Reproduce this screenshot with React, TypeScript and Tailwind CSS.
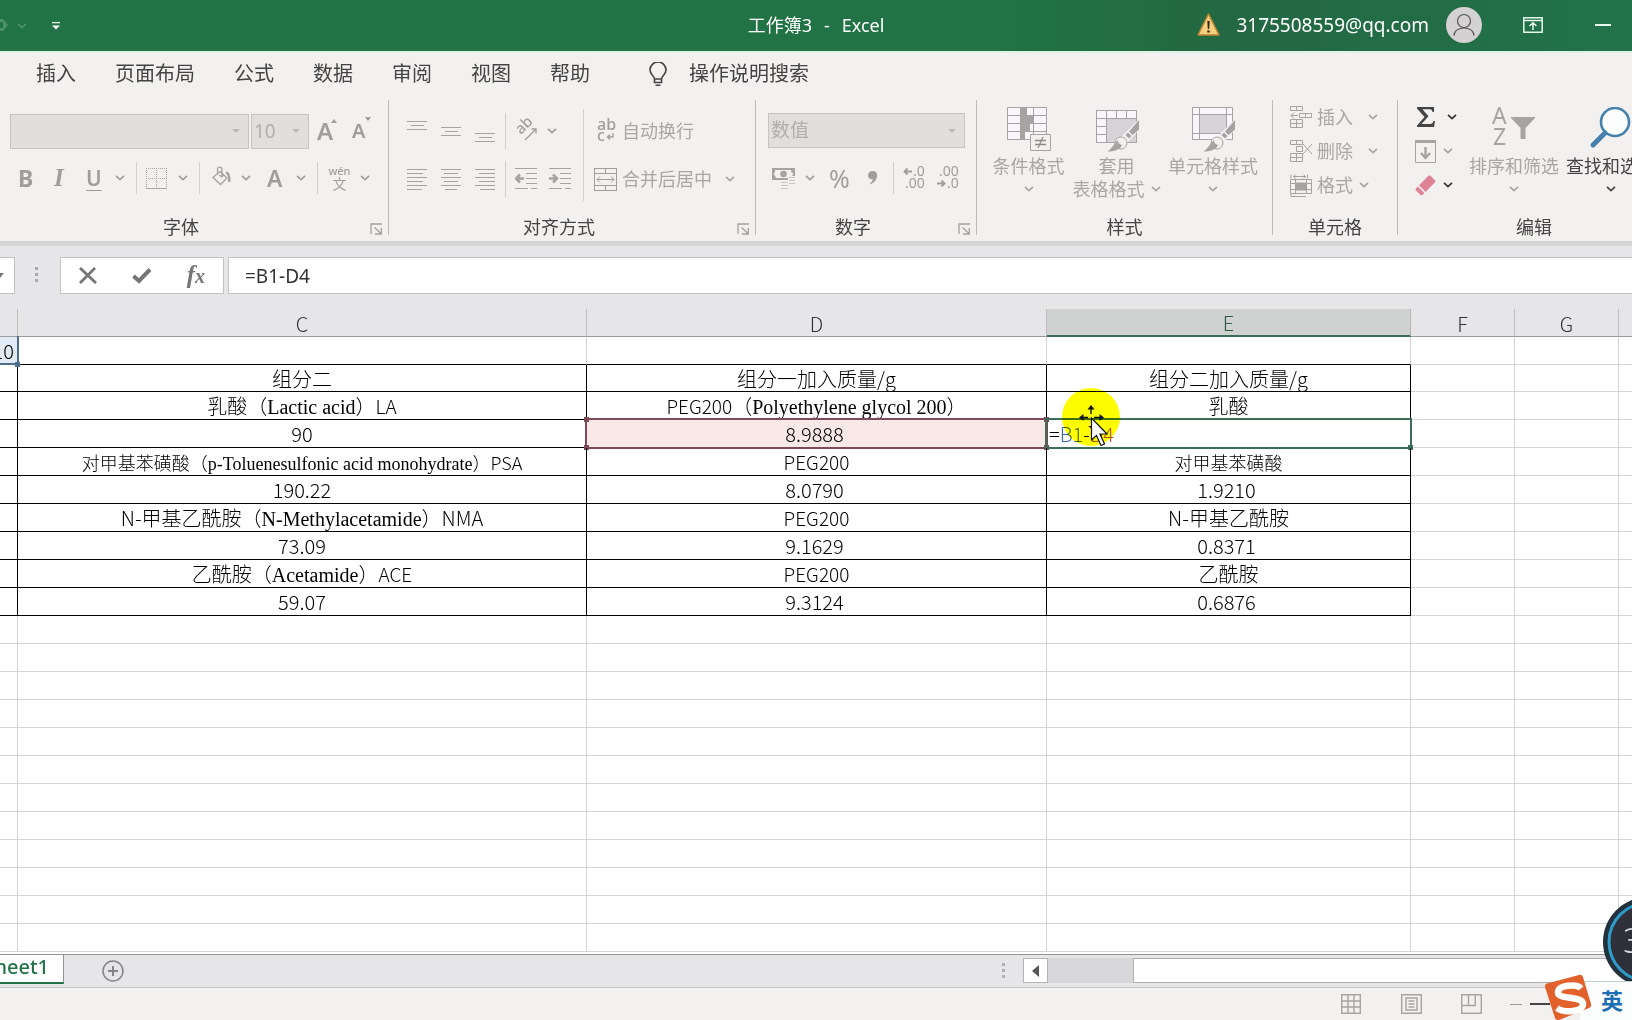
import type { ReactNode } from 'react';
import clsx from 'clsx';

const UI_FONT = "font-['Noto_Sans','Noto_Sans_CJK_SC',sans-serif]";
const CELL_FONT = "font-['Noto_Sans_CJK_SC',sans-serif]";

function Chevron({ className }: { className?: string }) {
  return (
    <svg width="10" height="6" viewBox="0 0 10 6" fill="none" stroke="currentColor" strokeWidth="1.7" className={clsx('shrink-0', className)}>
      <path d="M1 .8 5 4.6 9 .8" />
    </svg>
  );
}

function Caret() {
  return (
    <svg width="8" height="4" viewBox="0 0 8 4" className="mr-2 shrink-0 text-[#bbb9b8]">
      <path d="M0 0h8L4 4z" fill="currentColor" />
    </svg>
  );
}

function Tool({ label, className, children }: { label: string; className?: string; children: ReactNode }) {
  return (
    <button type="button" aria-label={label} className={clsx('flex shrink-0 items-center', className)}>
      {children}
    </button>
  );
}

function Divider({ className }: { className?: string }) {
  return <div className={clsx('w-px shrink-0 bg-[#d2d0cf]', className)} />;
}

function Combo({ label, value, className }: { label: string; value: string; className?: string }) {
  return (
    <div className={clsx('flex h-[35px] items-center border border-[#c6c4c3] bg-[#e1dfde]', className)}>
      <select aria-label={label} defaultValue={value} className="h-full min-w-0 flex-1 appearance-none pl-0.5 text-[19px] text-[#b1afae] outline-none">
        <option>{value}</option>
      </select>
      <Caret />
    </div>
  );
}

function Launcher({ label }: { label: string }) {
  return (
    <button type="button" aria-label={label} className="mr-[5px]">
      <svg width="13" height="12" viewBox="0 0 13 12" fill="none" stroke="#a3a1a0" strokeWidth="1.3">
        <path d="M1 11V1h11M4.500 4.500 11 10.500M11.300 5v6H5" />
      </svg>
    </button>
  );
}

function Group({ title, launcher, className, children }: { title: string; launcher?: boolean; className?: string; children: ReactNode }) {
  return (
    <section className={clsx('flex h-[135px] shrink-0 flex-col border-r border-[#bdbbba]', className)}>
      <div className="h-[115px]">{children}</div>
      <div className="flex h-5 items-end">
        <h2 className={clsx('flex-1 text-center text-[18px] leading-4 text-[#444]', launcher && 'pr-2')}>{title}</h2>
        {launcher && <Launcher label={`${title}设置`} />}
      </div>
    </section>
  );
}

/* Stacked strokes used for the alignment buttons: y, x1, x2 */
function Lines({ rows }: { rows: number[][] }) {
  return (
    <svg width="21" height="22" viewBox="0 0 21 22" stroke="#a6a4a3" shapeRendering="crispEdges">
      {rows.map(([y, x1, x2]) => (
        <path key={y} d={`M${x1} ${y + 0.5}H${x2}`} />
      ))}
    </svg>
  );
}

function Indent({ flip }: { flip?: boolean }) {
  return (
    <svg width="22" height="22" viewBox="0 0 22 22" fill="none" stroke="#a6a4a3">
      <path d="M0 .5h22M11 5.500h11M11 10.500h11M11 15.500h11M0 20.500h13M16 20.500h6" shapeRendering="crispEdges" />
      <path d={flip ? 'M0 10.500h8M4 6.500l4 4-4 4' : 'M9 10.500H1M5 6.500l-4 4 4 4'} strokeWidth="2.600" />
    </svg>
  );
}

function FontGroup() {
  return (
    <Group title="字体" launcher className="w-[389px]">
      <div className="flex items-center pt-[13px] pl-[10px]">
        <Combo label="字体" value="" className="w-[239px]" />
        <Combo label="字号" value="10" className="ml-0.5 w-[58px]" />
        <Tool label="增大字号" className="ml-2 w-7 items-start">
          <span className="text-[24px] leading-8 font-semibold text-[#a09e9d]">A</span>
          <svg width="6" height="4" viewBox="0 0 6 4" className="mt-1 -ml-0.5"><path d="M3 0l3 4H0z" fill="#a09e9d" /></svg>
        </Tool>
        <Tool label="减小字号" className="ml-[7px] w-7 items-start">
          <span className="text-[20px] leading-9 font-semibold text-[#a09e9d]">A</span>
          <svg width="6" height="4" viewBox="0 0 6 4" className="mt-1"><path d="M0 0h6L3 4z" fill="#a09e9d" /></svg>
        </Tool>
      </div>
      <div className="mt-[11px] flex h-9 items-center pl-[18px] text-[#a09e9d]">
        <Tool label="加粗" className="w-9 text-[23px] leading-8 font-bold">B</Tool>
        <Tool label="倾斜" className="w-8 font-['Liberation_Serif',serif] text-[25px] leading-8 font-bold italic">I</Tool>
        <Tool label="下划线" className="w-[29px] text-[21px] leading-8 font-semibold underline decoration-1 underline-offset-4">U</Tool>
        <Chevron />
        <Divider className="ml-[11px] h-8" />
        <Tool label="边框" className="ml-[9px]">
          <svg width="21" height="21" viewBox="0 0 21 21" fill="none" stroke="#a6a4a3" shapeRendering="crispEdges">
            <path d="M.5 0v20M20.500 0v20M0 .5h21M10.500 0v20M0 10.500h21" strokeDasharray="1 1" />
            <path d="M0 20.500h21" />
          </svg>
        </Tool>
        <Chevron className="ml-[11px]" />
        <Divider className="ml-[11px] h-8" />
        <Tool label="填充颜色" className="ml-[12px] pb-1">
          <svg width="19" height="20" viewBox="0 0 19 20" fill="none" stroke="#a6a4a3" strokeWidth="1.3">
            <path d="M8 5.500 15 12l-6.500 6.500L1 11.500z" />
            <path d="M5.500 8V3.200q0-2 2.200-2t2.200 2V11M7 9l2.900 2L12 8.500" />
            <path d="M14 6.500c3 .5 3.500 4 3.200 9.500" strokeWidth="2.400" />
          </svg>
        </Tool>
        <Chevron className="ml-[10px]" />
        <Tool label="字体颜色" className="ml-4 text-[23px] leading-8 font-semibold">A</Tool>
        <Chevron className="ml-[14px]" />
        <Divider className="ml-[11px] h-8" />
        <Tool label="拼音指南" className="ml-[10px] w-[22px] flex-col">
          <span className="text-[11px] leading-[10px] font-medium">wén</span>
          <span className="text-[14px] leading-[15px]">文</span>
        </Tool>
        <Chevron className="ml-[10px]" />
      </div>
    </Group>
  );
}

function AlignGroup() {
  return (
    <Group title="对齐方式" launcher className="w-[367px]">
      <div className="flex h-full">
        <div className="pl-[18px]">
          <div className="mt-[13px] flex h-9 items-center gap-[13px]">
            <Tool label="顶端对齐"><Lines rows={[[1, 0, 20], [5, 4, 17], [9, 0, 20]]} /></Tool>
            <Tool label="垂直居中"><Lines rows={[[7, 0, 20], [11, 4, 17], [15, 0, 20]]} /></Tool>
            <Tool label="底端对齐"><Lines rows={[[13, 0, 20], [17, 4, 17], [21, 0, 20]]} /></Tool>
            <Divider className="-ml-1 h-9" />
            <Tool label="方向" className="-ml-[3px]">
              <svg width="22" height="22" viewBox="0 0 22 22" fill="none" stroke="#a09e9d" strokeWidth="1.4" className="overflow-visible">
                <text transform="translate(5 15) rotate(-45)" fontSize="15" fontWeight="500" fill="#a09e9d" stroke="none">ab</text>
                <path d="M9 20 20 9M15.500 9H20v4.500" />
              </svg>
            </Tool>
            <Chevron className="-ml-1 text-[#a09e9d]" />
          </div>
          <div className="mt-3 flex h-9 items-center gap-[13px]">
            <Tool label="左对齐"><Lines rows={[[1, 0, 20], [5, 0, 16], [9, 0, 20], [13, 0, 16], [17, 0, 20], [21, 0, 15]]} /></Tool>
            <Tool label="居中"><Lines rows={[[1, 0, 20], [5, 3, 17], [9, 0, 20], [13, 3, 17], [17, 0, 20], [21, 4, 16]]} /></Tool>
            <Tool label="右对齐"><Lines rows={[[1, 0, 20], [5, 4, 20], [9, 0, 20], [13, 4, 20], [17, 0, 20], [21, 5, 20]]} /></Tool>
            <Divider className="-ml-1 h-9" />
            <Tool label="减少缩进量" className="-ml-1"><Indent /></Tool>
            <Tool label="增加缩进量" className="-ml-px"><Indent flip /></Tool>
          </div>
        </div>
        <Divider className="mt-[9px] ml-3 h-[92px]" />
        <div className="pl-[10px] text-[18px] text-[#a9a7a6]">
          <button type="button" className="mt-[13px] flex h-9 items-center gap-[5px] whitespace-nowrap">
            <svg width="23" height="24" viewBox="0 0 23 24" fill="none" stroke="#a09e9d" strokeWidth="1.3" className="overflow-visible">
              <text x="3" y="11" fontSize="16" fontWeight="500" fill="#a09e9d" stroke="none">ab</text>
              <text x="3" y="22" fontSize="16" fontWeight="500" fill="#a09e9d" stroke="none">c</text>
              <path d="M19 14v4h-5.500M16 15.500 13.500 18l2.500 2.500" />
            </svg>
            自动换行
          </button>
          <button type="button" className="mt-3 flex h-9 items-center gap-[5px] whitespace-nowrap">
            <svg width="23" height="23" viewBox="0 0 23 23" fill="none" stroke="#a09e9d">
              <path d="M.5.5h22v22H.5zM.5 5.500h22M.5 17.500h22M11.500 1v4M11.500 18v4" shapeRendering="crispEdges" />
              <path d="M3 11.500h17M6 8.500l-3 3 3 3M17 8.500l3 3-3 3" />
            </svg>
            合并后居中
            <Chevron className="ml-2" />
          </button>
        </div>
      </div>
    </Group>
  );
}

function NumberGroup() {
  return (
    <Group title="数字" launcher className="w-[221px]">
      <div className="pt-[13px] pl-3">
        <Combo label="数字格式" value="数值" className="w-[197px]" />
      </div>
      <div className="mt-3 flex h-9 items-center pl-4 text-[#a09e9d]">
        <Tool label="会计数字格式">
          <svg width="24" height="23" viewBox="0 0 24 23">
            <path d="M0 1h23v12H0zM3 3v2a2 2 0 0 1-1 1v2q1 0 2 3h15q0-2 2-3V6q-2 0-2-3z" fill="#a6a4a3" fillRule="evenodd" />
            <circle cx="11.500" cy="7" r="3.300" fill="#a6a4a3" />
            <path d="M16 9h8v9h-8zM8 14h9v8H8z" fill="#f3f1f0" />
            <path d="M17 10.500h6M17 13.500h6M17 16.500h6M9 15.500h7M9 18.500h7M9 21.500h7" stroke="#c9c7c6" />
          </svg>
        </Tool>
        <Chevron className="ml-[9px]" />
        <Tool label="百分比样式" className="ml-[14px] text-[25px] leading-8">%</Tool>
        <Tool label="千位分隔样式" className="ml-[18px]">
          <svg width="10" height="14" viewBox="0 0 10 14"><path d="M4.500 0C8 0 9.500 2.200 9 5.500 8.500 9.500 5.500 12.500 1 13.500c2.500-2 3.600-3.500 3.800-5.200C2 8.600 0 7 0 4.500 0 2 2 0 4.500 0" fill="#a09e9d" /></svg>
        </Tool>
        <Divider className="ml-[15px] h-8" />
        <Tool label="增加小数位数" className="ml-[9px]">
          <svg width="24" height="24" viewBox="0 0 24 24" fill="#a09e9d" fontSize="14" className="overflow-visible">
            <text x="10" y="10">.0</text><text x="2" y="22">.00</text>
            <path d="M9 5.500H1.500M4.500 2.500l-3 3 3 3" fill="none" stroke="#a09e9d" strokeWidth="1.800" />
          </svg>
        </Tool>
        <Tool label="减少小数位数" className="ml-[10px]">
          <svg width="24" height="24" viewBox="0 0 24 24" fill="#a09e9d" fontSize="14" className="overflow-visible">
            <text x="2" y="10">.00</text><text x="10" y="22">.0</text>
            <path d="M0 17.500h7.500M4.500 14.500l3 3-3 3" fill="none" stroke="#a09e9d" strokeWidth="1.800" />
          </svg>
        </Tool>
      </div>
    </Group>
  );
}

function Brush() {
  return (
    <>
      <path d="M45 12v11L32 37l-8-4z" fill="#f3f1f0" stroke="none" />
      <path d="M45 13v9.500L38.500 28 35 24.500zM34 25.500l3.500 3.500-2.500 2.500-3.500-3.500z" fill="#a6a4a3" stroke="none" />
      <circle cx="27" cy="36" r="6" fill="#f3f1f0" />
      <path d="M13 44.500c4-1.500 6-6.500 11-11.500 0 3 1 4 4 5-1.500 4.500-8 7-15 6.500" fill="#a6a4a3" stroke="none" />
    </>
  );
}

function BigButton({ icon, lines, dark, className }: { icon: ReactNode; lines: string[]; dark?: boolean; className?: string }) {
  return (
    <button type="button" className={clsx('flex shrink-0 flex-col items-center pt-[7px] text-[18px] whitespace-nowrap', dark ? 'text-[#444]' : 'text-[#a9a7a6]', className)}>
      <svg width="46" height="47" viewBox="0 0 46 47" fill="none" stroke="#a6a4a3">{icon}</svg>
      <span className="leading-6">{lines[0]}</span>
      <span className="flex h-[22px] items-center gap-1.5">
        {lines[1]}
        <Chevron />
      </span>
    </button>
  );
}

function StyleGroup() {
  return (
    <Group title="样式" className="w-[296px]">
      <div className="flex gap-2 pl-[15px]">
        <BigButton
          className="w-[73px]"
          lines={['条件格式']}
          icon={
            <>
              <path d="M1.500.5h39v32h-39zM1.500 8.500h39M1.500 16.500h39M1.500 24.500h39M14.500.5v32M27.500.5v32" fill="#f8f6fa" />
              <path d="M14 1h7v7h-7zM14 9h13v7H14zM14 17h10v7H14zM14 25h5v7h-5z" fill="#a6a4a3" stroke="none" />
              <path d="M24.500 27.500h20v16h-20z" fill="#f3f1f0" />
              <path d="M29 33.500h11M29 37.500h11M37 30l-5 11" stroke="#8f8d8c" strokeWidth="1.300" />
            </>
          }
        />
        <BigButton
          className="w-[87px]"
          lines={['套用', '表格格式']}
          icon={
            <>
              <path d="M2.500 3.500h40v32h-40z" fill="#f8f6fa" />
              <path d="M13 12h29v23H13z" fill="#d5d2d8" stroke="none" />
              <path d="M2.500 3.500h40v32h-40zM2.500 11.500h40M2.500 19.500h10M2.500 27.500h10M12.500 3.500v32M22.500 3.500v8M32.500 3.500v8" />
              <Brush />
            </>
          }
        />
        <BigButton
          className="w-[90px]"
          lines={['单元格样式']}
          icon={
            <>
              <path d="M2.500.5h40v32h-40zM2.500 7.500h40M2.500 26.500h40M9.500.5v32M36.500.5v32" fill="#f8f6fa" />
              <path d="M10 8h26v18H10z" fill="#d5d2d8" stroke="none" />
              <Brush />
            </>
          }
        />
      </div>
    </Group>
  );
}

function CellsGroup() {
  const items = [
    {
      label: '插入',
      gap: 'ml-[15px]',
      icon: <path d="M.5.5h12v4H.5zM6.500.5v4M.5 13.500h12v8H.5zM6.500 13.500v8M.5 17.500h12M9.500 7.500h12v4h-12zM15.500 7.500v4M8 9.500H1M4 6.500l-3 3 3 3" />,
    },
    {
      label: '删除',
      gap: 'ml-[15px]',
      icon: <path d="M.5.5h12v4H.5zM6.500.5v4M.5 13.500h12v8H.5zM6.500 13.500v8M.5 17.500h12M6.500 6.500h6v5h-6zM13 4l9 10M22 4l-9 10" />,
    },
    {
      label: '格式',
      gap: 'ml-[6px]',
      icon: (
        <>
          <path d="M.5 5.500h21v14H.5zM.5 9.500h21M.5 15.500h21M5.500 5.500v14M16.500 5.500v14M1 .5v4M17.500.5v4M3 2.500h13M5.500.5l-2 2 2 2M13.500.5l2 2-2 2M1 19.500v3h15" />
          <path d="M6 9h10v7H6z" fill="#a6a4a3" />
        </>
      ),
    },
  ];
  return (
    <Group title="单元格" className="w-[125px]">
      <div className="pl-[17px]">
        {items.map((item) => (
          <button key={item.label} type="button" className="flex h-[34px] items-center text-[18px] text-[#a9a7a6]">
            <svg width="22" height="23" viewBox="0 0 22 23" fill="none" stroke="#a6a4a3" className="mr-[5px]">{item.icon}</svg>
            {item.label}
            <Chevron className={item.gap} />
          </button>
        ))}
      </div>
    </Group>
  );
}

function EditGroup() {
  return (
    <Group title="编辑" className="w-[273px]">
      <div className="flex">
        <div className="w-[71px] pl-[17px]">
          <Tool label="自动求和" className="h-[34px] text-[#333]">
            <svg width="21" height="20" viewBox="0 0 21 20"><path d="M2 0h17v5h-1.500c-.5-2-1-2.700-3-2.700H7.500l6 7-7 7.700h8.500c2 0 3-1 3.500-3H20l-1 6H2v-1.500l7.500-8.500L2 1.500z" fill="#444" /></svg>
            <Chevron className="ml-[11px]" />
          </Tool>
          <Tool label="填充" className="h-[34px] text-[#a09e9d]">
            <svg width="21" height="23" viewBox="0 0 21 23" fill="none" stroke="#a6a4a3">
              <path d="M.5 2.500h20v20H.5z" /><path d="M0 1.500h21" strokeWidth="3" />
              <path d="M10.500 7v11M6 13l4.500 5 4.500-5" strokeWidth="2.400" />
            </svg>
            <Chevron className="ml-[7px]" />
          </Tool>
          <Tool label="清除" className="h-[34px] text-[#333]">
            <svg width="21" height="21" viewBox="0 0 21 21" fill="#de8296"><path d="M13.500.8q1-1 2 0l4.500 4.500q1 1 0 2L10.500 17 4 10.300zM3 11.500 9.300 18l-1.800 2q-1 .8-2 0L1 15.500q-1-1 0-2z" /></svg>
            <Chevron className="ml-[7px]" />
          </Tool>
        </div>
        <BigButton
          className="w-[90px]"
          lines={['排序和筛选']}
          icon={
            <g stroke="none" fill="#a6a4a3">
              <text x="1" y="17" fontSize="23">A</text>
              <text x="2" y="38" fontSize="23">Z</text>
              <path d="M20 10h24v1L34.500 21v11h-5V21L20 11z" />
            </g>
          }
        />
        <BigButton
          dark
          className="ml-[7px] w-[90px]"
          lines={['查找和选择']}
          icon={
            <>
              <circle cx="27" cy="15" r="14" stroke="#4680ac" strokeWidth="2.600" fill="#fbfdff" />
              <path d="M17 26 5 38" stroke="#4680ac" strokeWidth="5" strokeLinecap="round" />
            </>
          }
        />
      </div>
    </Group>
  );
}

function TitleBar() {
  return (
    <header className="grid h-[51px] shrink-0 grid-cols-[1fr_auto_1fr] items-center bg-linear-to-r from-[#217346] from-60% via-[#236842] via-75% to-[#22724a] pb-0.5 text-white">
      <div className="flex items-center">
        <svg width="8" height="12" viewBox="0 0 8 12"><path d="M0 0h3l5 6-5 6H0V9h3V3H0z" fill="#4c916a" /></svg>
        <Chevron className="mt-0.5 ml-[9px] text-[#4c916a]" />
        <button type="button" aria-label="自定义快速访问工具栏" className="mt-0.5 ml-[25px]">
          <svg width="8" height="8" viewBox="0 0 8 8" fill="#fff"><path d="M0 0h8v1.300H0zM0 3.500h8L4 7.500z" /></svg>
        </button>
      </div>
      <h1 className="flex gap-3 text-[18px] leading-6">
        <span>工作簿3</span>
        <span>-</span>
        <span>Excel</span>
      </h1>
      <div className="flex items-center justify-end pr-[21px]">
        <svg width="23" height="23" viewBox="0 0 23 23">
          <path d="M11.500 1 22 22H1z" fill="#f5cf7c" stroke="#b98635" strokeWidth="1.500" strokeLinejoin="round" />
          <path d="M10.300 8h2.400l-.5 8h-1.400zM10.300 17.500h2.400v2h-2.400z" fill="#33280f" />
        </svg>
        <span className="ml-4 text-[19px] leading-6">3175508559@qq.com</span>
        <button type="button" aria-label="帐户" className="ml-[17px]">
          <svg width="36" height="36" viewBox="0 0 36 36" fill="none" stroke="#555" strokeWidth="1.200">
            <circle cx="18" cy="18" r="18" fill="#d3d1d1" stroke="none" />
            <circle cx="18" cy="14" r="6.500" />
            <path d="M8 28.500c0-10 20-10 20 0" />
          </svg>
        </button>
        <button type="button" aria-label="功能区显示选项" className="ml-[41px]">
          <svg width="20" height="16" viewBox="0 0 20 16" fill="none" stroke="#e6f7ec" strokeWidth="1.500">
            <path d="M.8.8h18.400v14.400H.8zM.8 3.500h18.400M10 13V6M6.500 9 10 5.800 13.500 9" />
          </svg>
        </button>
        <button type="button" aria-label="最小化" className="ml-[52px] flex h-6 items-center">
          <span className="h-0.5 w-4 bg-[#e6f7ec]" />
        </button>
      </div>
    </header>
  );
}

const tabs = ['插入', '页面布局', '公式', '数据', '审阅', '视图', '帮助'];

function Ribbon() {
  return (
    <div className="h-[190px] shrink-0 overflow-hidden border-t-2 border-[#dcf3e3] bg-[#f3f1f0]">
      <nav className="flex h-[47px] items-center gap-[39px] pb-1.5 pl-9 text-[20px] text-[#444]">
        {tabs.map((tab) => (
          <button key={tab} type="button" className="shrink-0">{tab}</button>
        ))}
        <button type="button" className="ml-5 flex shrink-0 items-center gap-[22px]">
          <svg width="18" height="24" viewBox="0 0 18 24" fill="none" stroke="#444" strokeWidth="1.600">
            <path d="M5.500 17c0-3-4.500-4.500-4.500-9a8 8 0 0 1 16 0c0 4.500-4.500 6-4.500 9zM5.500 17v3.500h7V17M6.500 23.200h5" />
          </svg>
          操作说明搜索
        </button>
      </nav>
      <div className="flex">
        <FontGroup />
        <AlignGroup />
        <NumberGroup />
        <StyleGroup />
        <CellsGroup />
        <EditGroup />
      </div>
    </div>
  );
}

function FormulaBar() {
  return (
    <div className="flex h-[68px] shrink-0 items-start border-t-[5px] border-[#d5d4d5] bg-[#e6e6e8] pt-[11px]">
      <button type="button" aria-label="名称框" className="flex h-[37px] w-[15px] items-center border border-l-0 border-[#c3c2c3] bg-white">
        <svg width="4" height="5" viewBox="0 0 4 5"><path d="M-4 0h8L0 5z" fill="#777" /></svg>
      </button>
      <div className="mt-[10px] ml-5 flex flex-col gap-[3px]">
        <span className="size-[3px] bg-[#aaa]" />
        <span className="size-[3px] bg-[#aaa]" />
        <span className="size-[3px] bg-[#aaa]" />
      </div>
      <div className="ml-[22px] flex h-[37px] w-[164px] items-center justify-between border border-[#c3c2c3] bg-white pr-[18px] pl-[18px]">
        <button type="button" aria-label="取消">
          <svg width="18" height="17" viewBox="0 0 18 17" stroke="#757575" strokeWidth="2.800"><path d="M1 1l16 15M16 1 1 16" /></svg>
        </button>
        <button type="button" aria-label="输入">
          <svg width="20" height="16" viewBox="0 0 20 16" fill="none" stroke="#757575" strokeWidth="4"><path d="M1.500 8 7 13 18 1.500" /></svg>
        </button>
        <button type="button" aria-label="插入函数" className="font-['Liberation_Serif',serif] text-[25px] leading-8 font-bold text-[#757575] italic">
          f<span className="text-[20px]">x</span>
        </button>
      </div>
      <input aria-label="编辑栏" defaultValue="=B1-D4" className="ml-1 h-[37px] min-w-0 flex-1 border border-r-0 border-[#c3c2c3] bg-white pl-4 text-[19px] text-[#333] outline-none" />
    </div>
  );
}

const Serif = ({ children }: { children: ReactNode }) => <span className="font-['Liberation_Serif',serif] leading-5 font-normal">{children}</span>;
const Latin = ({ children }: { children: ReactNode }) => <span className="text-[19px] leading-5">{children}</span>;
const Num = ({ children }: { children: ReactNode }) => <span className="pr-1">{children}</span>;

// Columns C, D and E for the filled rows 2 to 10
const rows: ReactNode[][] = [
  ['组分二', '组分一加入质量/g', '组分二加入质量/g'],
  [
    <>乳酸（<Serif>Lactic acid</Serif>）<Latin>LA</Latin></>,
    <><Latin>PEG200</Latin>（<Serif>Polyethylene glycol 200</Serif>）</>,
    '乳酸',
  ],
  ['90', <Num>8.9888</Num>, null],
  [
    <span className="text-[18px]">对甲基苯磺酸（<Serif>p-Toluenesulfonic acid monohydrate</Serif>）PSA</span>,
    <Latin>PEG200</Latin>,
    <span className="text-[18px]">对甲基苯磺酸</span>,
  ],
  ['190.22', <Num>8.0790</Num>, <Num>1.9210</Num>],
  [<>N-甲基乙酰胺（<Serif>N-Methylacetamide</Serif>）NMA</>, <Latin>PEG200</Latin>, 'N-甲基乙酰胺'],
  ['73.09', <Num>9.1629</Num>, <Num>0.8371</Num>],
  [<>乙酰胺（<Serif>Acetamide</Serif>）<Latin>ACE</Latin></>, <Latin>PEG200</Latin>, '乙酰胺'],
  ['59.07', <Num>9.3124</Num>, <Num>0.6876</Num>],
];

function Pointer() {
  return (
    <>
      <div className="pointer-events-none absolute -top-8 left-[15px] size-[58px] rounded-full bg-[#fdfd00] mix-blend-multiply" />
      <svg width="32" height="46" viewBox="0 0 32 46" className="pointer-events-none absolute -top-[15px] left-8">
        <path d="M12 0l3.500 4.500h-2.800V9h-1.400V4.500H8.500zM0 12.500 4.500 9v2.800H9v1.400H4.500V16zM25 12.500 20.500 9v2.800H15v1.400h5.500V16zM9 21h4v3z" fill="#111" />
        <path d="M12.500 13v22l5-4.500 4.500 10 3.500-1.500-4.500-10h7z" fill="#fff" stroke="#111" strokeWidth="1.200" />
      </svg>
    </>
  );
}

function Sheet() {
  const grid = 'border-r border-b border-[#d4d4d4] p-0 last:border-r-0';
  return (
    <div className={clsx('min-h-0 flex-1 overflow-hidden bg-white', CELL_FONT)}>
      <table className="w-full table-fixed border-separate border-spacing-0 text-[20px] leading-6 font-light text-black">
        <colgroup>
          <col className="w-[18px]" />
          <col className="w-[569px]" />
          <col className="w-[460px]" />
          <col className="w-[364px]" />
          <col className="w-[104px]" />
          <col className="w-[104px]" />
          <col />
        </colgroup>
        <thead>
          <tr className="bg-[#e6e6e8] text-[#333]">
            {['', 'C', 'D', 'E', 'F', 'G', ''].map((name, i) => (
              <th
                key={i}
                scope="col"
                className={clsx(
                  'h-7 p-0 pt-0.5 font-light last:border-r-0',
                  name === 'E' ? 'border-r border-b-2 border-r-[#b5b5b5] border-b-[#3c6e57] bg-[#d0d1d1] text-[#2c5c46]' : 'border-r border-b border-r-[#bdbdbe] border-b-[#9b9b9c]',
                )}
              >
                {name}
              </th>
            ))}
          </tr>
        </thead>
        <tbody>
          <tr className="h-7">
            <td className="relative border-r border-b border-[#4f6d8d] bg-[#e2ebf5] p-0">
              <div className="flex h-[26px] justify-end overflow-hidden pt-px pr-[3px]">10</div>
              <div className="absolute -inset-y-px -right-0.5 left-0 border-r-2 border-b-2 border-[#4f6d8d]" />
              <span className="absolute -right-[3px] -bottom-[3px] size-[5px] bg-[#4f6d8d]" />
            </td>
            {[0, 1, 2].map((c) => (
              <td key={c} className="border-r border-b border-r-[#d4d4d4] border-b-black p-0" />
            ))}
            {[3, 4, 5].map((c) => (
              <td key={c} className={grid} />
            ))}
          </tr>
          {rows.map((cells, r) => (
            <tr key={r} className={r === 0 ? 'h-[27px]' : 'h-7'}>
              <td className="border-r border-b border-black p-0" />
              {cells.map((cell, c) => {
                if (r === 2 && c === 2) {
                  return (
                    <td key={c} className="relative border-r border-b border-black p-0 pt-px text-left">
                      <div className="absolute -inset-0.5 border-2 border-[#3c6e57]" />
                      <span className="absolute -right-[3px] -bottom-[3px] size-[5px] bg-[#3c6e57]" />
                      <div className="pl-0.5">
                        =<span className="text-[#4469b0]">B1</span>-<span className="text-[#b8502f]">D4</span>
                      </div>
                      <Pointer />
                    </td>
                  );
                }
                const referenced = r === 2 && c === 1;
                return (
                  <td key={c} className={clsx('relative border-r border-b border-black p-0 pt-px text-center whitespace-nowrap', referenced && 'bg-[#f8e9e8]')}>
                    {cell}
                    {referenced && (
                      <div className="absolute -inset-0.5 border-2 border-[#7d4b57]">
                        <span className="absolute -top-[3px] -left-[3px] size-[5px] bg-[#7d4b57]" />
                        <span className="absolute -top-[3px] -right-[3px] size-[5px] bg-[#7d4b57]" />
                        <span className="absolute -bottom-[3px] -left-[3px] size-[5px] bg-[#7d4b57]" />
                        <span className="absolute -right-[3px] -bottom-[3px] size-[5px] bg-[#7d4b57]" />
                      </div>
                    )}
                  </td>
                );
              })}
              {[3, 4, 5].map((c) => (
                <td key={c} className={grid} />
              ))}
            </tr>
          ))}
          {Array.from({ length: 12 }).map((_, r) => (
            <tr key={r} className="h-7">
              {Array.from({ length: 7 }).map((_, c) => (
                <td key={c} className={grid} />
              ))}
            </tr>
          ))}
        </tbody>
      </table>
    </div>
  );
}

function SheetTabs() {
  return (
    <div className="flex h-[34px] shrink-0 border-t border-b border-t-[#949495] border-b-[#c6c5c5] bg-[#e6e6e8]">
      <button type="button" className="flex h-[29px] w-16 justify-end overflow-hidden border-r border-b-2 border-r-[#949495] border-b-[#217346] bg-white pr-[14px] text-[20px] leading-6 font-medium text-[#217346]">
        Sheet1
      </button>
      <button type="button" aria-label="新工作表" className="ml-[38px]">
        <svg width="22" height="22" viewBox="0 0 22 22" fill="none" stroke="#858585" strokeWidth="1.500">
          <circle cx="11" cy="11" r="10" />
          <path d="M11 6v10M6 11h10" strokeWidth="2" />
        </svg>
      </button>
      <div className="mt-2 ml-auto flex flex-col gap-[3px]">
        <span className="size-[3px] bg-[#b0b0b0]" />
        <span className="size-[3px] bg-[#b0b0b0]" />
        <span className="size-[3px] bg-[#b0b0b0]" />
      </div>
      <div className="mt-[3px] ml-[18px] flex h-[25px] w-[609px] bg-[#d7d7d9]">
        <button type="button" aria-label="向左滚动" className="flex w-[25px] items-center justify-center border border-[#b5b5b5] bg-white">
          <svg width="7" height="12" viewBox="0 0 7 12"><path d="M7 0v12L0 6z" fill="#555" /></svg>
        </button>
        <div className="ml-[85px] flex-1 border border-r-0 border-[#b0b0b0] bg-white" />
      </div>
    </div>
  );
}

function StatusBar() {
  return (
    <footer className="flex h-8 shrink-0 items-center justify-end bg-[#f3f1f0] pr-[82px]">
      <button type="button" aria-label="普通">
        <svg width="20" height="20" viewBox="0 0 20 20" fill="none" stroke="#a5a4a3" strokeWidth="1.400"><path d="M.7.7h18.600v18.600H.7zM.7 7h18.600M.7 13h18.600M7 .7v18.600M13 .7v18.600" /></svg>
      </button>
      <button type="button" aria-label="页面布局" className="ml-10">
        <svg width="21" height="20" viewBox="0 0 21 20" fill="none" stroke="#a5a4a3" strokeWidth="1.400"><path d="M.7.7h19.600v18.600H.7zM5 4h11v12H5zM7.500 7h6M7.500 10h6M7.500 13h6" /></svg>
      </button>
      <button type="button" aria-label="分页预览" className="ml-[39px]">
        <svg width="21" height="20" viewBox="0 0 21 20" fill="none" stroke="#a5a4a3" strokeWidth="1.400"><path d="M.7.7h19.600v18.600H.7zM.7 11.500h13.500V.7M7.500.7v10.800" /></svg>
      </button>
      <button type="button" aria-label="缩小" className="ml-7 flex h-5 items-center"><span className="h-px w-3 bg-[#9a9998]" /></button>
      <span className="ml-2 h-0.5 w-5 bg-[#444]" />
    </footer>
  );
}

/* Floating desktop widgets in the bottom right corner */
function Overlays() {
  return (
    <>
      <div className="absolute right-0 bottom-[39px] h-[84px] w-[30px] overflow-hidden">
        <svg width="30" height="84" viewBox="0 0 30 84">
          <circle cx="46" cy="45" r="45" fill="#22313c" />
          <circle cx="46" cy="45" r="39" fill="#2f3039" stroke="#2f9bc8" strokeWidth="3" />
          <text x="21" y="56" fontSize="34" fontWeight="300" fill="#d7dade">3</text>
        </svg>
      </div>
      <div className="absolute right-0 bottom-0 flex h-[39px] w-[52px] items-center justify-end border-t border-[#c0ced2] bg-[#fcfdfd] pr-[9px] pb-1">
        <span className={clsx('text-[22px] leading-6 font-bold text-[#1c6fb3]', CELL_FONT)}>英</span>
      </div>
      <svg width="50" height="46" viewBox="0 0 50 46" className="absolute right-[39px] bottom-0">
        <path d="M4 9.500 36 1q3-.7 4 2l8 27q.8 3-2 4L16 46q-3 .6-4-2L2 13q-.5-2.500 2-3.500" fill="#e2602c" />
        <path d="M38 14.500C34 9.500 15 11 15 18.500c0 7.500 25 3 25 11.500 0 8-19 9.500-26 4" fill="none" stroke="#fff" strokeWidth="6.500" />
      </svg>
    </>
  );
}

export default function App() {
  return (
    <main className={clsx('relative flex h-screen flex-col overflow-hidden', UI_FONT)}>
      <TitleBar />
      <Ribbon />
      <FormulaBar />
      <Sheet />
      <SheetTabs />
      <StatusBar />
      <Overlays />
    </main>
  );
}
